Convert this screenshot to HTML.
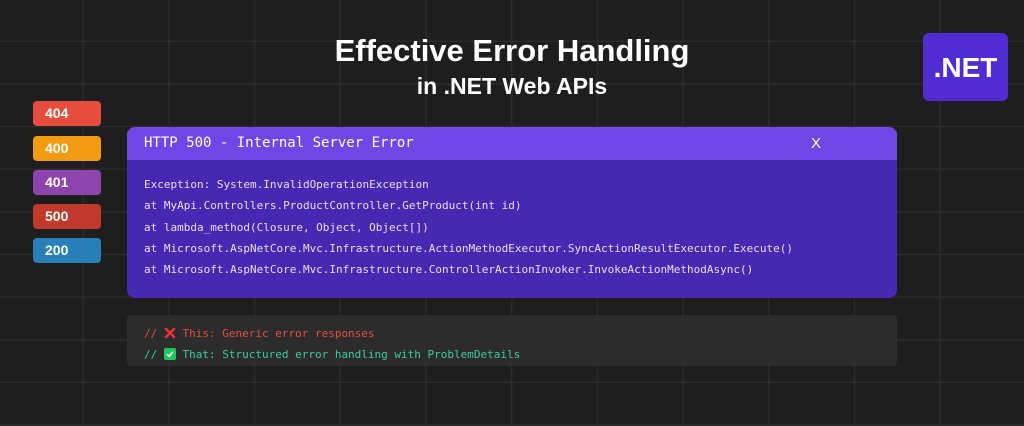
<!DOCTYPE html>
<html><head><meta charset="utf-8"><style>
html,body{margin:0;padding:0}
body{width:1024px;height:426px;overflow:hidden;position:relative;background-color:#1e1e1e;
background-image:linear-gradient(to right,#2b2b2b 0,#2b2b2b 1.5px,transparent 1.5px),linear-gradient(to bottom,#2b2b2b 0,#2b2b2b 1.5px,transparent 1.5px);
background-size:85.7px 42.65px;background-position:82.5px 40.5px;font-family:"Liberation Sans",sans-serif}
.t1{position:absolute;left:0;width:1024px;top:33px;text-align:center;color:#fff;font-weight:bold;font-size:31px}
.t2{position:absolute;left:0;width:1024px;top:73px;text-align:center;color:#fff;font-weight:bold;font-size:23px}
.net{position:absolute;left:923px;top:33px;width:85px;height:68px;background:#512bd4;border-radius:6px;color:#fff;font-size:28px;font-weight:bold;text-align:center;line-height:70px}
.b{position:absolute;left:33px;width:68px;height:25px;border-radius:4px;color:#fff;font-weight:bold;font-size:14px;line-height:25px;box-sizing:border-box;padding-left:12px}
.box{position:absolute;left:127px;top:127px;width:770px;height:171px;background:#4628b2;border-radius:8px;overflow:hidden}
.hd{height:33px;background:#7047e6;color:#fff;font-family:"DejaVu Sans Mono",monospace;font-size:14px;line-height:33px;padding-left:17px;position:relative}
.hd span{position:absolute;left:684px;top:0;font-family:"Liberation Sans",sans-serif;font-size:15px}
.st{font-family:"DejaVu Sans Mono",monospace;font-size:11px;color:#e4e0f4;padding-left:17px;padding-top:14px}
.st div{height:21.3px;line-height:21.3px}
.code{position:absolute;left:127px;top:315px;width:770px;height:51px;background:#2c2c2c;border-radius:4px;font-family:"DejaVu Sans Mono",monospace;font-size:11px;padding-left:17px;box-sizing:border-box;padding-top:8px}
.code div{height:21px;line-height:21px}
</style></head><body>
<div class="t1">Effective Error Handling</div>
<div class="t2">in .NET Web APIs</div>
<div class="net">.NET</div>
<div class="b" style="top:101px;background:#e74c3c">404</div>
<div class="b" style="top:136px;background:#f39c12">400</div>
<div class="b" style="top:170px;background:#8e44ad">401</div>
<div class="b" style="top:204px;background:#c0392b">500</div>
<div class="b" style="top:238px;background:#2980b9">200</div>
<div class="box">
<div class="hd">HTTP 500 - Internal Server Error<span>X</span></div>
<div class="st">
<div>Exception: System.InvalidOperationException</div>
<div>at MyApi.Controllers.ProductController.GetProduct(int id)</div>
<div>at lambda_method(Closure, Object, Object[])</div>
<div>at Microsoft.AspNetCore.Mvc.Infrastructure.ActionMethodExecutor.SyncActionResultExecutor.Execute()</div>
<div>at Microsoft.AspNetCore.Mvc.Infrastructure.ControllerActionInvoker.InvokeActionMethodAsync()</div>
</div></div>
<div class="code">
<div style="color:#e74c3c">// <svg width="12" height="12" viewBox="0 0 12 12" style="vertical-align:-2px"><path d="M2 2L10 10M10 2L2 10" stroke="#e8303a" stroke-width="2.6" stroke-linecap="round"/></svg> This: Generic error responses</div>
<div style="color:#3ec9a0">// <svg width="12" height="12" viewBox="0 0 12 12" style="vertical-align:-2px"><rect width="12" height="12" rx="2" fill="#22c55e"/><path d="M3 6.2L5.2 8.3L9 3.8" stroke="#fff" stroke-width="1.5" fill="none"/></svg> That: Structured error handling with ProblemDetails</div>
</div>
</body></html>
